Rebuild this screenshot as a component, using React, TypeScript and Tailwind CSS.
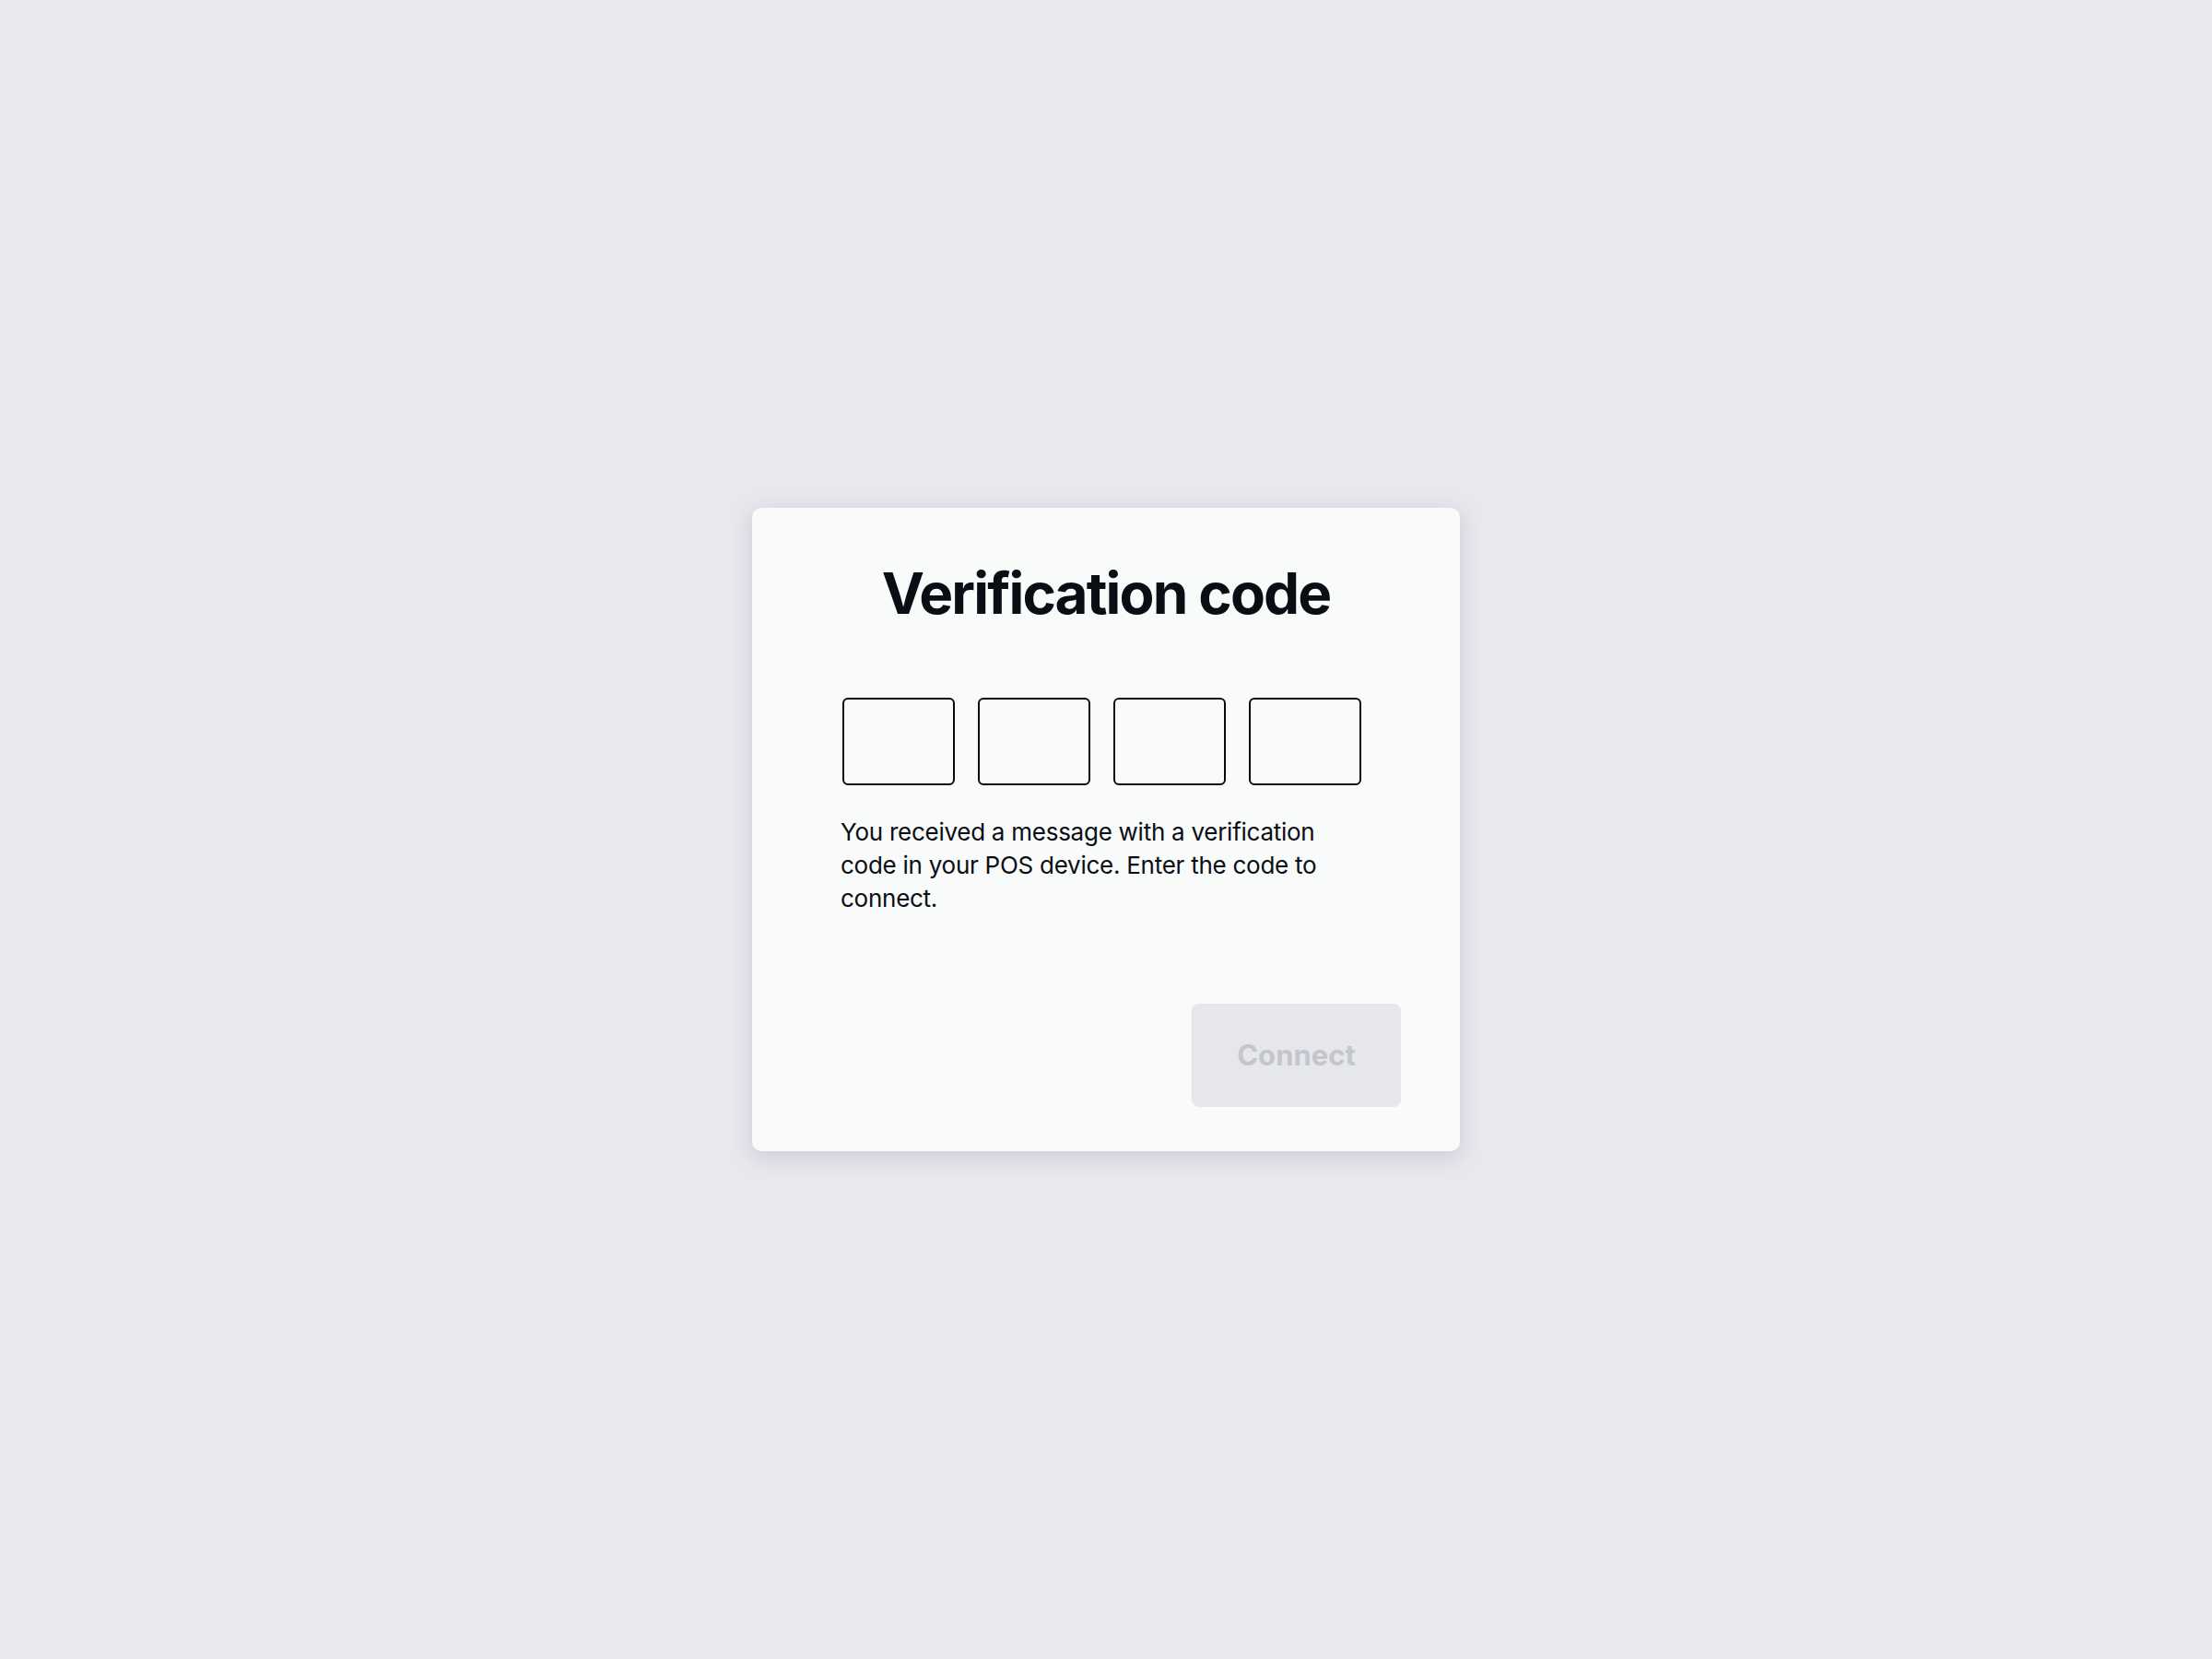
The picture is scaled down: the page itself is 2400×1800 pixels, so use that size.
import React from "react";

export default function App() {
  return (
    <div className="min-h-screen w-full bg-[#e8e9ee] flex items-center justify-center" style={{ fontFamily: "Inter, 'Noto Sans', sans-serif" }}>
      <div className="w-[768px] h-[698px] bg-[#f9fafa] rounded-[10px] shadow-[0_6px_24px_rgba(60,60,90,0.18)] flex flex-col pt-[55px] pb-[48px]">
        <h1 className="text-center text-[62px] leading-[75px] font-bold tracking-[-0.03em] text-[#0a0d14]">Verification code</h1>
        <div className="pl-[98px] mt-[76px] flex gap-[25px]">
          {[0, 1, 2, 3].map((i) => (
            <input
              key={i}
              type="text"
              maxLength={1}
              className="w-[122px] h-[95px] rounded-[6px] border-2 border-[#0a0a0a] bg-transparent text-center text-[40px] outline-none"
            />
          ))}
        </div>
        <p className="ml-[96px] w-[560px] mt-[33px] text-[26px] leading-[36px] tracking-[-0.01em] text-[#0a0d14]">
          You received a message with a verification code in your POS device. Enter the code to connect.
        </p>
        <div className="mt-auto flex justify-end pr-[64px]">
          <button disabled className="w-[227px] h-[112px] rounded-[8px] bg-[#e6e7ec] text-[#c4c6cb] text-[31px] font-bold">
            Connect
          </button>
        </div>
      </div>
    </div>
  );
}
